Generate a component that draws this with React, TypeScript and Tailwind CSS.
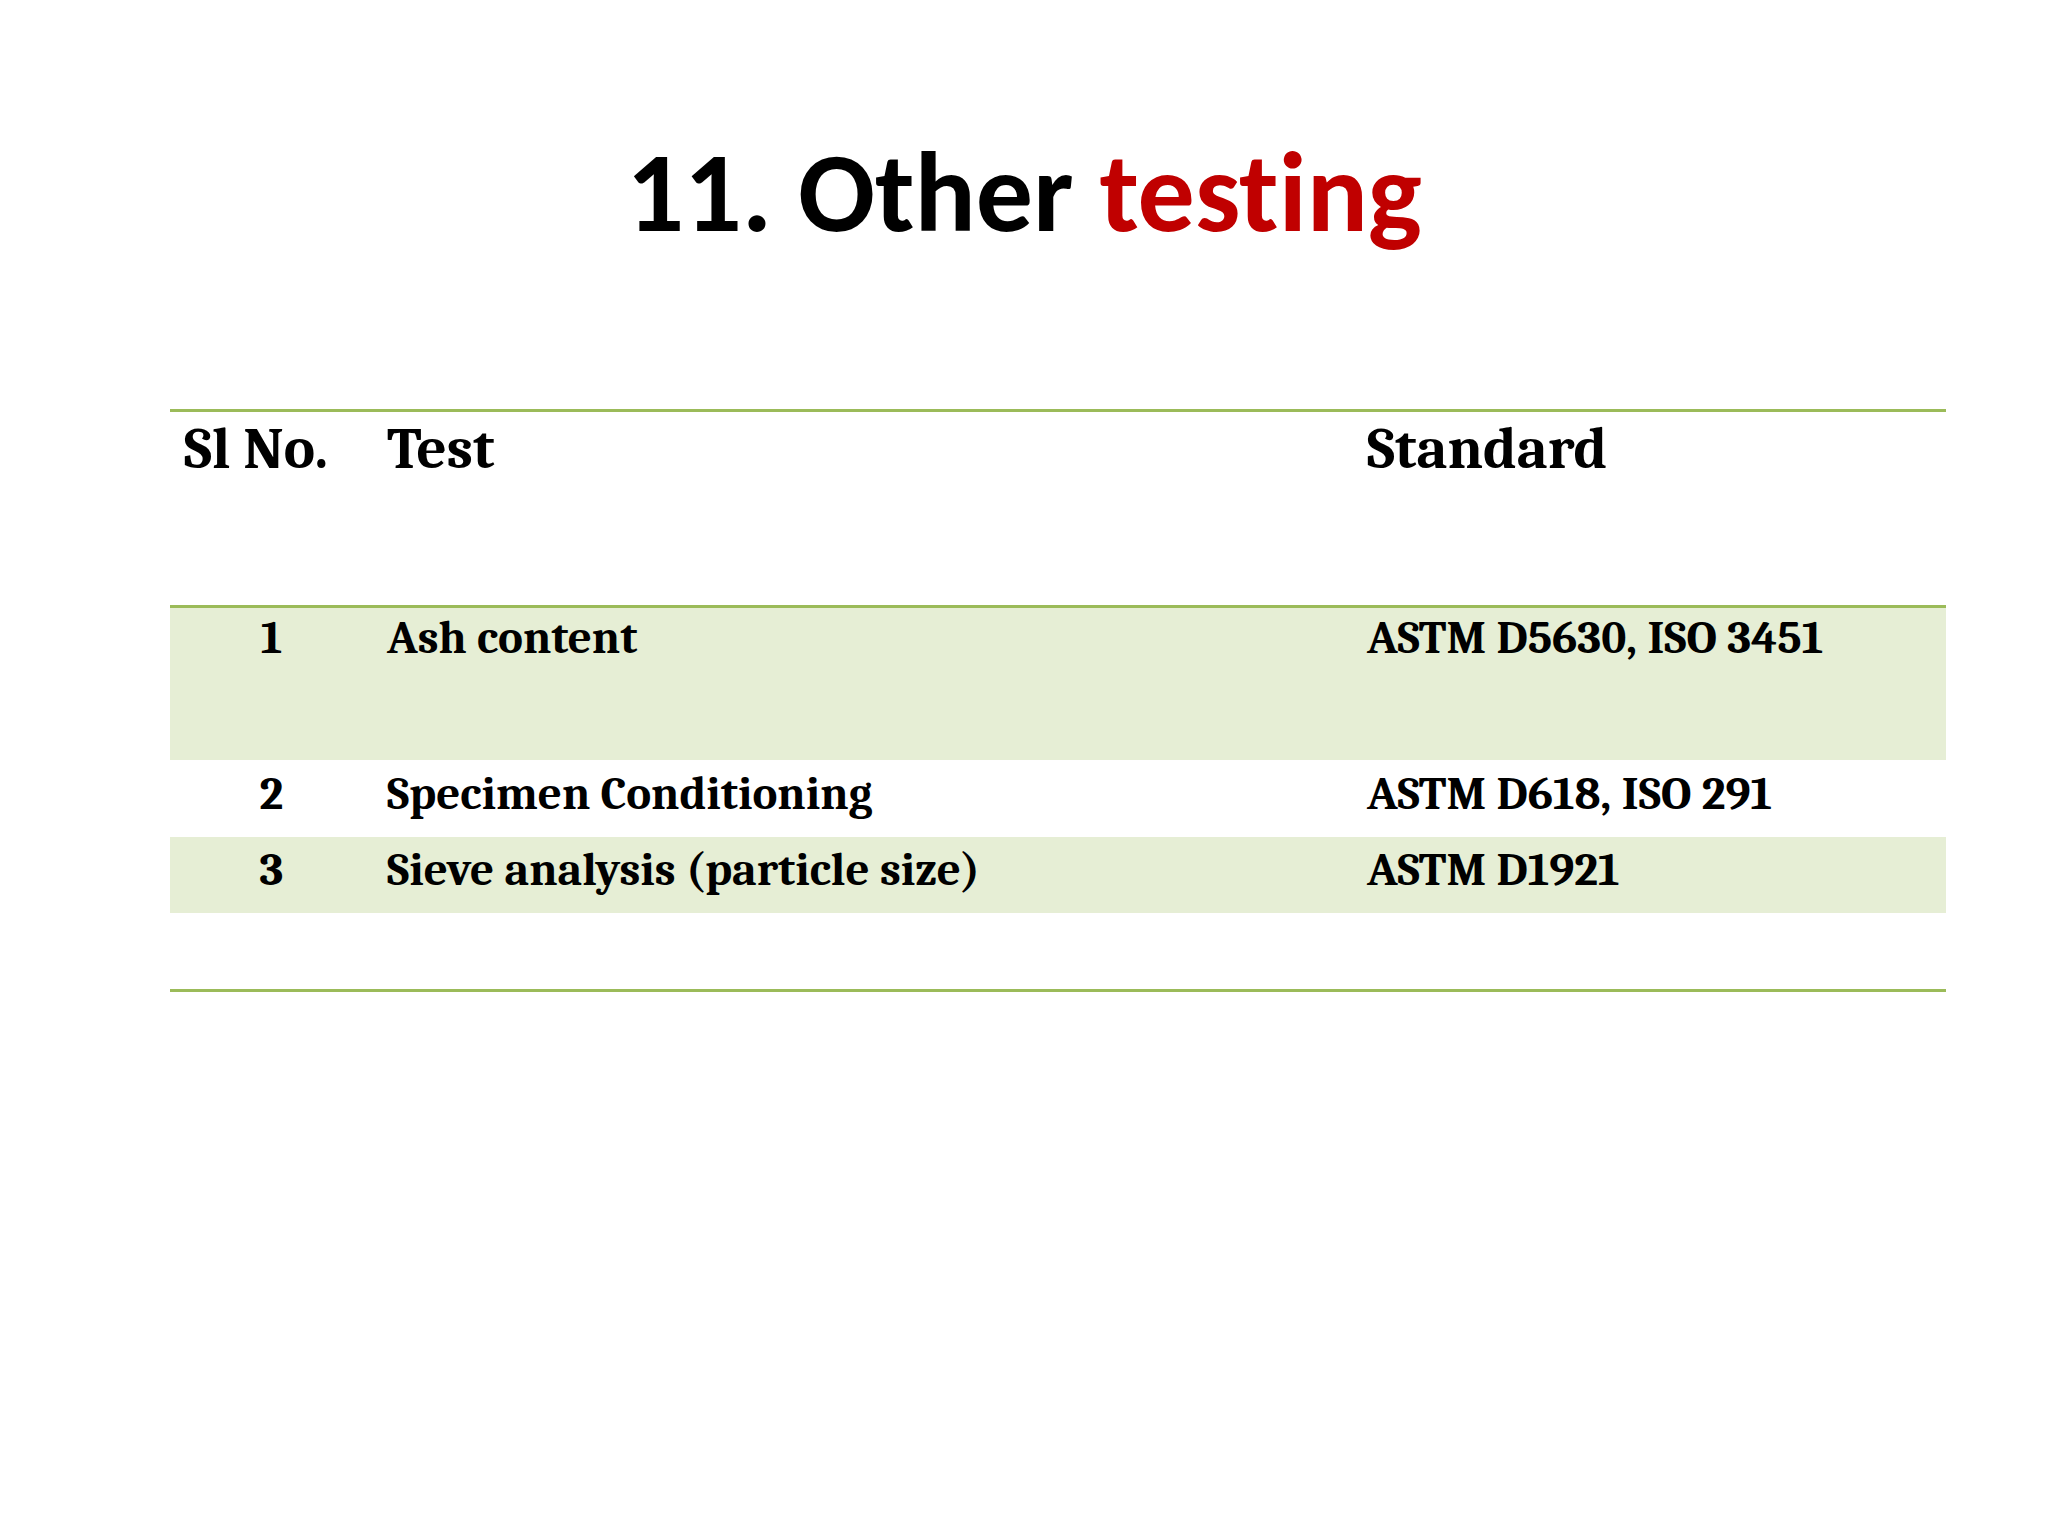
const rows = [
  { no: '1', test: 'Ash content', standard: 'ASTM D5630, ISO 3451', height: 'h-[155px]', shaded: true, pt: 'pt-[7px]', top: true },
  { no: '2', test: 'Specimen Conditioning', standard: 'ASTM D618, ISO 291', height: 'h-[77px]', shaded: false, pt: 'pt-[11px]', top: false },
  { no: '3', test: 'Sieve analysis (particle size)', standard: 'ASTM D1921', height: 'h-[76px]', shaded: true, pt: 'pt-[10px]', top: false },
]

const serif = "font-['Cambria','Liberation_Serif',serif]"

export default function App() {
  return (
    <div className="w-[2048px] h-[1536px] bg-white text-black overflow-hidden">
      <h1 className="pt-[135px] text-center text-[114px] leading-none font-bold font-['Calibri','Open_Sans',sans-serif] [font-variant-ligatures:none]">
        11. Other <span className="text-[#c00000]">testing</span>
      </h1>

      <div className={`mt-[160px] mx-[170px] w-[1776px] ${serif} font-bold`}>
        {/* header */}
        <div className="border-t-[3px] border-[#9bbb59] h-[196px] grid grid-cols-[203px_980px_593px] pt-[8px] text-[59px] leading-none">
          <div className="pl-[14px]">Sl No.</div>
          <div className="pl-[14px]">Test</div>
          <div className="pl-[14px]">Standard</div>
        </div>

        {rows.map((r) => (
          <div
            key={r.no}
            className={`grid grid-cols-[203px_980px_593px] text-[47px] leading-none ${r.height} ${r.pt} ${
              r.shaded ? 'bg-[#e6eed5]' : 'bg-white'
            } ${r.top ? 'border-t-[3px] border-[#9bbb59]' : ''}`}
          >
            <div className="text-center">{r.no}</div>
            <div className="pl-[14px]">{r.test}</div>
            <div className="pl-[14px]">{r.standard}</div>
          </div>
        ))}

        {/* empty last row */}
        <div className="h-[79px] border-b-[3px] border-[#9bbb59]" />
      </div>
    </div>
  )
}
